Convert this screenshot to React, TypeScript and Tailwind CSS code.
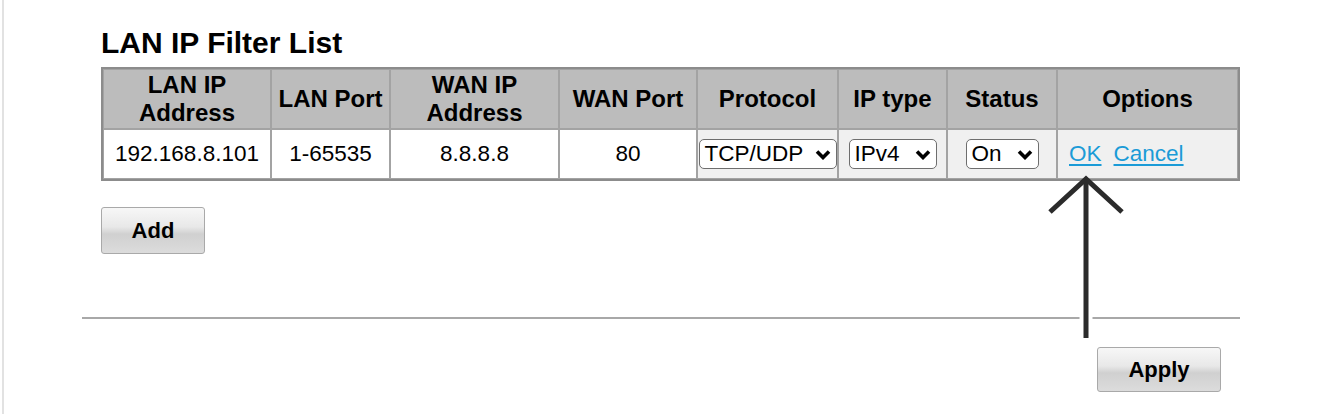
const headers = [
  ["LAN IP", "Address"],
  ["LAN Port"],
  ["WAN IP", "Address"],
  ["WAN Port"],
  ["Protocol"],
  ["IP type"],
  ["Status"],
  ["Options"],
];

const Chevron = () => (
  <svg width="16" height="11" viewBox="0 0 16 11" className="shrink-0">
    <path d="M2 2.5 L8 8.5 L14 2.5" fill="none" stroke="#000" strokeWidth="3.6" />
  </svg>
);

const FakeSelect = ({ value, width }: { value: string; width: string }) => (
  <div className={`${width} flex h-[30px] items-center justify-between rounded-[5px] border-[1.5px] border-[#6e6e6e] bg-white pl-[5px] pr-[5px]`}>
    <span>{value}</span>
    <Chevron />
  </div>
);

const GrayButton = ({ label, size }: { label: string; size: string }) => (
  <button className={`${size} rounded-[3px] border border-[#a9a9a9] bg-[linear-gradient(to_bottom,#f7f7f7,#e8e8e8_42%,#d0d0d0_58%,#dcdcdc)] text-[22px] font-bold text-black`}>
    {label}
  </button>
);

const Arrow = () => (
  <svg width="100" height="175" viewBox="0 0 100 175" className="pointer-events-none absolute left-[1040px] top-[170px]">
    <line x1="46" y1="138" x2="46" y2="157" stroke="#fff" strokeWidth="13" />
    <line x1="46" y1="10" x2="46" y2="168" stroke="#2b2b2b" strokeWidth="5" />
    <polyline points="10,42 46,9 82,42" fill="none" stroke="#2b2b2b" strokeWidth="5" />
  </svg>
);

export default function App() {
  const cell = "flex items-center justify-center border border-[#a3a3a3]";
  return (
    <div className="relative h-[414px] w-[1340px] overflow-hidden bg-white font-['Liberation_Sans',Arial,sans-serif] text-black">
      <div className="ml-[2px] h-full border-l-2 border-[#e2e2e2]">
        <div className="ml-[78px] w-[1158px] pt-[26px]">
          <div className="pl-[19px]">
            <h1 className="text-[30px] font-bold leading-[34px]">LAN IP Filter List</h1>

            <div className="mt-[7px] grid w-[1139px] grid-cols-[168px_119px_169px_138px_141px_109px_110px_181px] border-2 border-[#8c8c8c] text-[22.5px]">
              {headers.map((h, i) => (
                <div key={i} className={`${cell} h-[60px] flex-col bg-[#bcbcbc] text-[24px] font-bold leading-[28px]`}>
                  {h.map((line) => (
                    <span key={line}>{line}</span>
                  ))}
                </div>
              ))}

              <div className={`${cell} h-[50px] bg-white`}>192.168.8.101</div>
              <div className={`${cell} h-[50px] bg-white`}>1-65535</div>
              <div className={`${cell} h-[50px] bg-white`}>8.8.8.8</div>
              <div className={`${cell} h-[50px] bg-white`}>80</div>
              <div className={`${cell} h-[50px] bg-[#f0f0f0]`}>
                <FakeSelect value="TCP/UDP" width="w-[138px]" />
              </div>
              <div className={`${cell} h-[50px] bg-[#f0f0f0]`}>
                <FakeSelect value="IPv4" width="w-[88px]" />
              </div>
              <div className={`${cell} h-[50px] bg-[#f0f0f0]`}>
                <FakeSelect value="On" width="w-[73px]" />
              </div>
              <div className={`${cell} h-[50px] !justify-start gap-[12px] bg-[#f0f0f0] pl-[11px] text-[#1b9bd7]`}>
                <a href="#" className="underline underline-offset-[3px]">OK</a>
                <a href="#" className="underline underline-offset-[3px]">Cancel</a>
              </div>
            </div>

            <div className="mt-[26px]">
              <GrayButton label="Add" size="h-[47px] w-[104px]" />
            </div>
          </div>

          <hr className="mt-[63px] border-0 border-t-2 border-[#a8a8a8]" />

          <div className="mt-[28px] flex justify-end pr-[19px]">
            <GrayButton label="Apply" size="h-[45px] w-[124px]" />
          </div>
        </div>
      </div>
      <Arrow />
    </div>
  );
}
